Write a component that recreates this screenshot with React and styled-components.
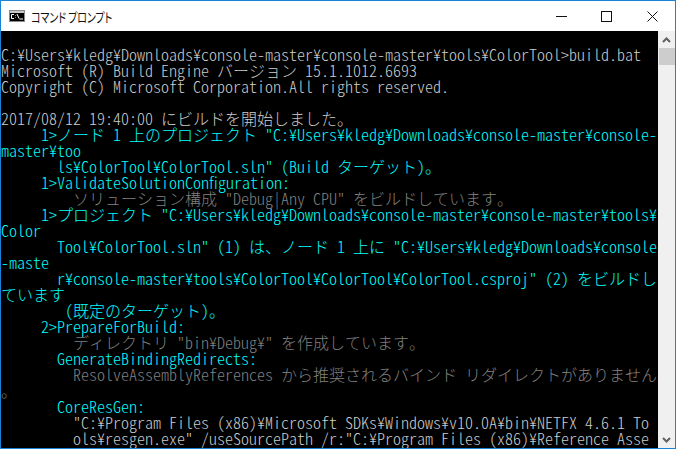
import React from "react";
import styled, { createGlobalStyle } from "styled-components";

const Global = createGlobalStyle`
  html, body { margin: 0; padding: 0; background: #000; overflow: hidden; }
`;

const Window = styled.div`
  width: 676px;
  height: 449px;
  box-sizing: border-box;
  border: 1px solid #1883d7;
  display: flex;
  flex-direction: column;
  overflow: hidden;
`;

const TitleBar = styled.header`
  height: 30px;
  flex: none;
  background: #fff;
  display: flex;
  align-items: center;
  padding-left: 8px;
`;

const AppIcon = styled.svg`
  width: 16px;
  height: 12px;
  flex: none;
`;

const Title = styled.span`
  margin-left: 6px;
  flex: 1;
  font: 13px "Noto Sans CJK JP", sans-serif;
  font-feature-settings: "palt" 1;
  letter-spacing: -0.25px;
  color: #111;
  transform: scaleX(0.78);
  transform-origin: left center;
`;

const WindowButton = styled.div`
  width: 46px;
  height: 30px;
  display: flex;
  align-items: center;
  justify-content: center;
  padding-left: ${(p) => p.$nudge || 0}px;
  box-sizing: border-box;
`;

const Body = styled.div`
  flex: 1;
  min-height: 0;
  display: flex;
`;

const Console = styled.main`
  width: 657px;
  flex: none;
  background: #000;
  padding-top: 15px;
  box-sizing: border-box;
  overflow: hidden;
`;

const Row = styled.div`
  height: 16px;
  line-height: 16px;
  white-space: pre;
  font-family: "Noto Sans CJK JP", sans-serif;
  font-size: 16px;
  font-weight: 300;
  font-feature-settings: "hwid" 1;
  font-kerning: none;
  color: ${(p) => ({ white: "#cccccc", cyan: "#00ffff", gray: "#808080" })[p.$tone]};
`;

const ScrollBar = styled.aside`
  flex: 1;
  background: #f0f0f0;
  display: flex;
  flex-direction: column;
`;

const ScrollButton = styled.div`
  height: 17px;
  flex: none;
  display: flex;
  align-items: center;
  justify-content: center;
`;

const Track = styled.div`
  flex: 1;
`;

const Thumb = styled.div`
  height: 17px;
  margin-left: 1px;
  background: #cdcdcd;
`;

const lines = [
  ["white", 'C:¥Users¥kledg¥Downloads¥console-master¥console-master¥tools¥ColorTool>build.bat'],
  ["white", "Microsoft (R) Build Engine バージョン 15.1.1012.6693"],
  ["white", "Copyright (C) Microsoft Corporation.All rights reserved."],
  ["white", ""],
  ["white", "2017/08/12 19:40:00 にビルドを開始しました。"],
  ["cyan", '     1>ノード 1 上のプロジェクト "C:¥Users¥kledg¥Downloads¥console-master¥console-'],
  ["cyan", "master¥too"],
  ["cyan", '       ls¥ColorTool¥ColorTool.sln" (Build ターゲット)。'],
  ["cyan", "     1>ValidateSolutionConfiguration:"],
  ["gray", '         ソリューション構成 "Debug|Any CPU" をビルドしています。'],
  ["cyan", '     1>プロジェクト "C:¥Users¥kledg¥Downloads¥console-master¥console-master¥tools¥'],
  ["cyan", "Color"],
  ["cyan", '       Tool¥ColorTool.sln" (1) は、ノード 1 上に "C:¥Users¥kledg¥Downloads¥console'],
  ["cyan", "-maste"],
  ["cyan", '       r¥console-master¥tools¥ColorTool¥ColorTool¥ColorTool.csproj" (2) をビルドし'],
  ["cyan", "ています"],
  ["cyan", "        (既定のターゲット)。"],
  ["cyan", "     2>PrepareForBuild:"],
  ["gray", '         ディレクトリ "bin¥Debug¥" を作成しています。'],
  ["cyan", "       GenerateBindingRedirects:"],
  ["gray", "         ResolveAssemblyReferences から推奨されるバインド リダイレクトがありません"],
  ["gray", "。"],
  ["cyan", "       CoreResGen:"],
  ["white", '         "C:¥Program Files (x86)¥Microsoft SDKs¥Windows¥v10.0A¥bin¥NETFX 4.6.1 To'],
  ["white", '         ols¥resgen.exe" /useSourcePath /r:"C:¥Program Files (x86)¥Reference Asse'],
];

export default function App() {
  return (
    <>
      <Global />
      <Window>
        <TitleBar>
          <AppIcon viewBox="0 0 16 12">
            <rect x="0.5" y="0.5" width="15" height="11" fill="#000" stroke="#8a8a8a" />
            <rect x="1" y="1" width="14" height="2" fill="#c8c8c8" />
            <path d="M5 4.500H2.500V8.500H5M6.500 5V5.500M6.500 7.500V8M8 4L10 8.500M10.500 9H14" fill="none" stroke="#fff" />
          </AppIcon>
          <Title>コマンド プロンプト</Title>
          <WindowButton $nudge={2}>
            <svg width="11" height="11" viewBox="0 0 11 11"><path d="M0 5.500H11" stroke="#111" /></svg>
          </WindowButton>
          <WindowButton>
            <svg width="11" height="11" viewBox="0 0 11 11"><rect x="0.5" y="0.500" width="10" height="10" fill="none" stroke="#111" /></svg>
          </WindowButton>
          <WindowButton>
            <svg width="11" height="11" viewBox="0 0 11 11"><path d="M0.500 0.500L10.500 10.500M10.500 0.500L0.500 10.500" stroke="#111" /></svg>
          </WindowButton>
        </TitleBar>
        <Body>
          <Console>
            {lines.map(([tone, text], i) => (
              <Row key={i} $tone={tone}>{text}</Row>
            ))}
          </Console>
          <ScrollBar>
            <ScrollButton>
              <svg width="9" height="6" viewBox="0 0 9 6"><path d="M1 5L4.500 1.500L8 5" fill="none" stroke="#606060" strokeWidth="2" /></svg>
            </ScrollButton>
            <Thumb />
            <Track />
            <ScrollButton>
              <svg width="9" height="6" viewBox="0 0 9 6"><path d="M1 1L4.500 4.500L8 1" fill="none" stroke="#606060" strokeWidth="2" /></svg>
            </ScrollButton>
          </ScrollBar>
        </Body>
      </Window>
    </>
  );
}
